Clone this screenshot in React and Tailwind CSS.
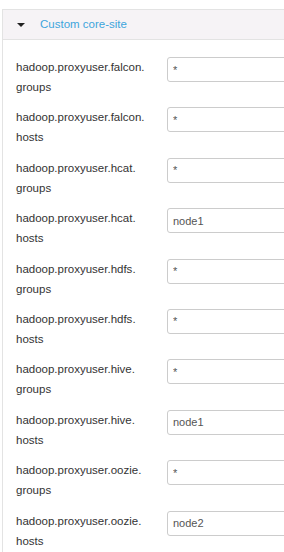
import React from "react";

const props = [
  ["falcon", "groups", "*"],
  ["falcon", "hosts", "*"],
  ["hcat", "groups", "*"],
  ["hcat", "hosts", "node1"],
  ["hdfs", "groups", "*"],
  ["hdfs", "hosts", "*"],
  ["hive", "groups", "*"],
  ["hive", "hosts", "node1"],
  ["oozie", "groups", "*"],
  ["oozie", "hosts", "node2"],
];

const App = () => {
  return (
    <div
      className="w-[284px] h-[552px] overflow-hidden bg-white pt-[9px]"
      style={{ fontFamily: '"Liberation Sans", Arial, sans-serif' }}
    >
      <div className="ml-[2px] border border-r-0 border-[#e3e3e3]">
        <div className="h-[30px] flex items-center bg-[#f6f3f6] border-b border-[#e3e3e3] pl-[14px]">
          <span className="w-0 h-0 border-l-[4px] border-r-[4px] border-t-[4px] border-l-transparent border-r-transparent border-t-[#222]" />
          <span className="ml-[15px] text-[11.5px] text-[#3da5dc]">Custom core-site</span>
        </div>
        <div className="pt-[17px] pl-[13px] pb-[20px] flex flex-col gap-[10.4px]">
          {props.map(([svc, kind, value]) => (
            <div key={svc + kind} className="flex h-[40px]">
              <label className="w-[151px] shrink-0 text-[11.5px] leading-[20px] text-[#333]">
                hadoop.proxyuser.{svc}.
                <br />
                {kind}
              </label>
              <input
                readOnly
                value={value}
                className="h-[25px] w-[200px] shrink-0 border border-[#ccc] rounded-[3px] px-[5px] text-[11px] text-[#555] outline-none"
              />
            </div>
          ))}
        </div>
      </div>
    </div>
  );
};

export default App;
